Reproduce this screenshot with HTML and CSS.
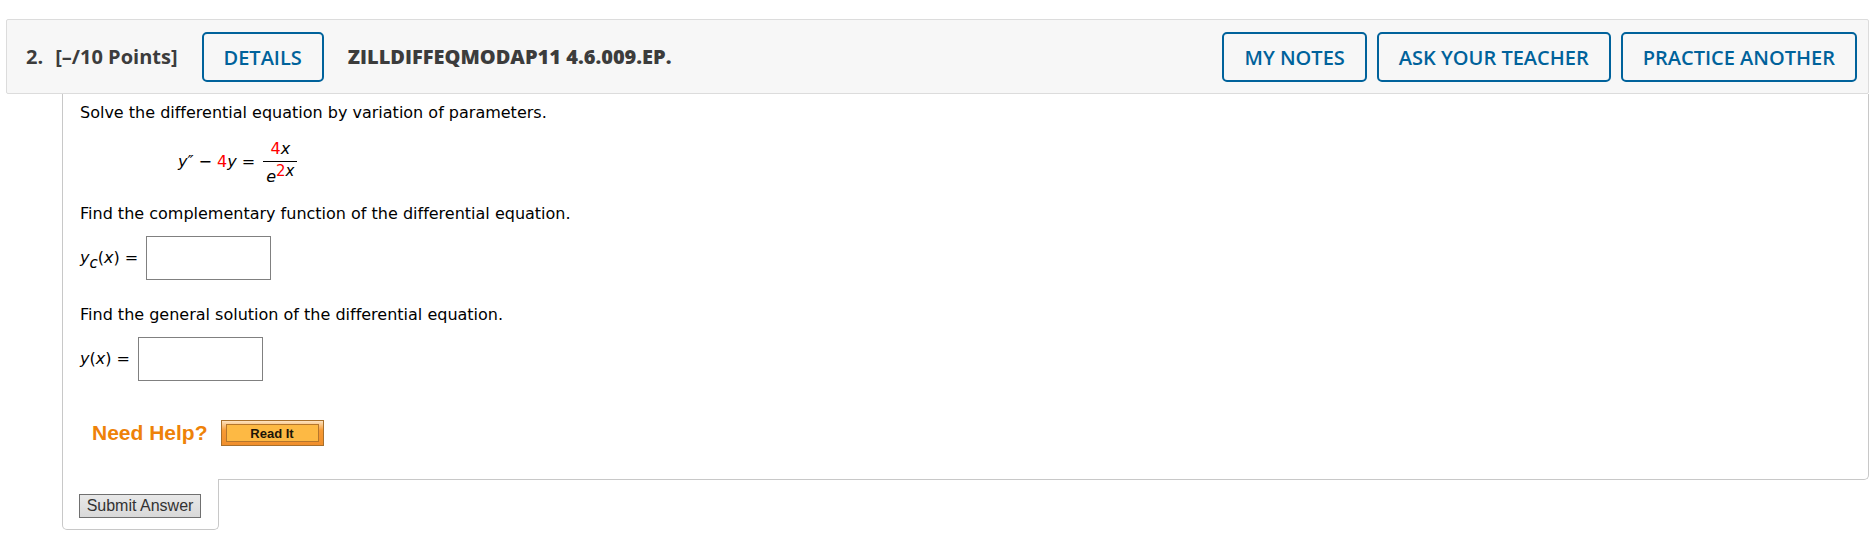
FILE: index.html
```html
<!DOCTYPE html>
<html lang="en">
<head>
    <meta charset="UTF-8">
    <meta name="viewport" content="width=device-width, initial-scale=1.0">
    <title>Question 2</title>
    <link rel="stylesheet" href="styles.css">
</head>
<body>
    <header class="question-header">
        <h2 class="points"><span>2.</span><span>[–/10 Points]</span></h2>
        <button type="button" class="btn">DETAILS</button>
        <strong class="source">ZILLDIFFEQMODAP11 4.6.009.EP.</strong>
        <div class="actions">
            <button type="button" class="btn">MY NOTES</button>
            <button type="button" class="btn">ASK YOUR TEACHER</button>
            <button type="button" class="btn">PRACTICE ANOTHER</button>
        </div>
    </header>

    <form class="question">
        <div class="question-body">
            <p>Solve the differential equation by variation of parameters.</p>
            <div class="equation">
                <span><i>y″</i> − <span class="num">4</span><i>y</i> =</span>
                <span class="fraction">
                    <span class="top"><span class="num">4</span><i>x</i></span>
                    <span class="bottom"><i>e</i><sup><span class="num">2</span><i>x</i></sup></span>
                </span>
            </div>
            <p>Find the complementary function of the differential equation.</p>
            <div class="answer">
                <label for="yc"><i>y</i><sub><i>c</i></sub>(<i>x</i>) =</label>
                <input type="text" id="yc">
            </div>
            <p>Find the general solution of the differential equation.</p>
            <div class="answer">
                <label for="y"><i>y</i>(<i>x</i>) =</label>
                <input type="text" id="y">
            </div>
            <div class="help">
                <span class="help-title">Need Help?</span>
                <button type="button" class="read-it"><span>Read It</span></button>
            </div>
        </div>
        <div class="submit-tab">
            <button type="submit" class="submit">Submit Answer</button>
        </div>
    </form>
</body>
</html>
```
FILE: styles.css
```css
* {
    box-sizing: border-box;
}
body {
    margin: 19px 7px 12px 6px;
    background: #fff;
    color: #000;
    font-family: Verdana, "DejaVu Sans", sans-serif;
    font-size: 16px;
    font-variant-ligatures: none;
    line-height: 20px;
}
p {
    margin: 0;
}

/* header bar */
.question-header {
    display: flex;
    align-items: center;
    padding: 12px 11px 11px 19px;
    background: #f7f7f7;
    border: 1px solid #dcdcdc;
    border-radius: 2px;
    color: #3c3c3c;
    font-family: "Open Sans", sans-serif;
    font-size: 20px;
    font-weight: 700;
}
.points {
    display: flex;
    gap: 12px;
    margin: 0 24px 0 0;
    font-size: 20px;
}
.source {
    margin-left: 24px;
}
.actions {
    display: flex;
    gap: 10px;
    margin-left: auto;
}
.btn {
    height: 50px;
    padding: 0 20px;
    background: #f7f7f7;
    border: 2px solid #00629b;
    border-radius: 5px;
    color: #00629b;
    font-family: "Open Sans", sans-serif;
    font-size: 20px;
    font-weight: 600;
    cursor: pointer;
}

/* question */
.question {
    margin-left: 56px;
}
.question-body {
    padding: 9px 17px 33px;
    border: 1px solid #c8c8c8;
    border-top: 0;
    border-bottom-right-radius: 5px;
}
.equation {
    display: flex;
    align-items: center;
    gap: 8px;
    margin: 16px 0 20px 98px;
}
.num {
    color: #f00;
}
.fraction {
    display: flex;
    flex-direction: column;
    text-align: center;
}
.fraction .top {
    padding-bottom: 2px;
    border-bottom: 1px solid #000;
}
.fraction .bottom {
    height: 22px;
    padding: 5px 3px 0;
}
sup, sub {
    font-size: 15px;
    line-height: 0;
}
sup {
    vertical-align: 6px;
}
sub {
    vertical-align: -5px;
}
.answer {
    display: flex;
    align-items: center;
    gap: 8px;
    margin: 12px 0 25px;
}
.answer input {
    width: 125px;
    height: 44px;
    padding: 0 8px;
    border: 1px solid #808080;
    font: inherit;
}
.help {
    display: flex;
    align-items: center;
    gap: 13px;
    margin: 39px 0 0 12px;
    font-family: Arial, "Liberation Sans", sans-serif;
    font-weight: 700;
}
.help-title {
    color: #ee8208;
    font-size: 21px;
}
.read-it {
    width: 103px;
    height: 26px;
    padding: 3px 4px;
    background: linear-gradient(#fde3c0, #f79a33 40%, #f08f2c);
    border: 1px solid #a8702c;
    font-family: inherit;
    font-size: 13px;
    font-weight: 700;
    cursor: pointer;
}
.read-it span {
    display: block;
    height: 18px;
    background: #fdb944;
    border: 1px solid #b5762c;
    color: #1c1408;
    line-height: 18px;
}
.submit-tab {
    position: relative;
    width: 157px;
    margin-top: -1px;
    padding: 15px 16px 11px;
    background: #fff;
    border: 1px solid #c8c8c8;
    border-top: 0;
    border-radius: 0 0 5px 5px;
}
.submit {
    display: block;
    width: 122px;
    height: 24px;
    padding: 0;
    background: linear-gradient(#e8e8e8, #d9d9d9);
    border: 1px solid #707070;
    color: #333;
    font-family: Arial, "Liberation Sans", sans-serif;
    font-size: 16px;
    line-height: 20px;
    cursor: pointer;
}
```
